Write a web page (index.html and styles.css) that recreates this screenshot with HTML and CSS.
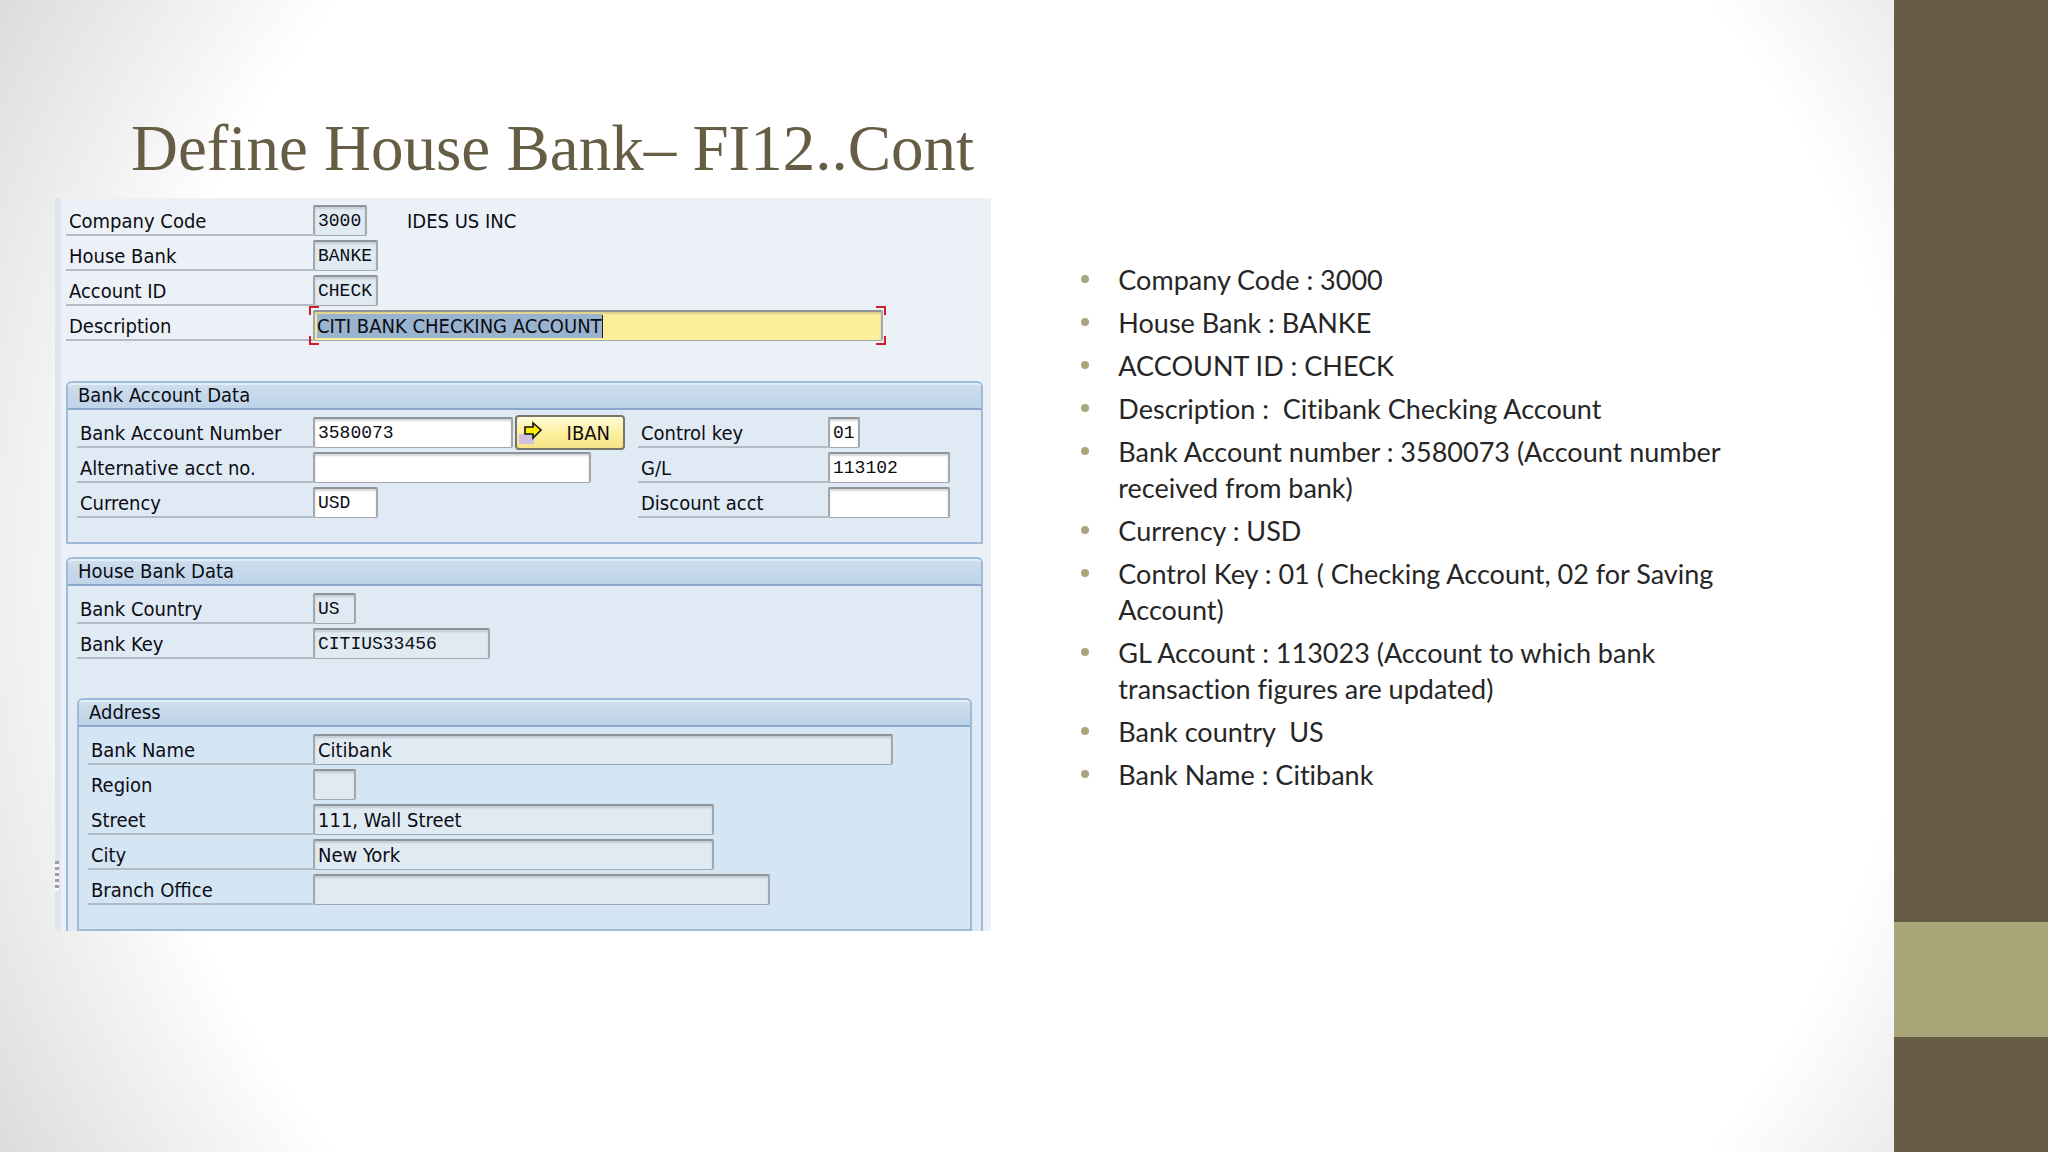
FILE: index.html
```html
<!DOCTYPE html>
<html lang="en">
<head>
    <meta charset="UTF-8">
    <meta name="viewport" content="width=device-width, initial-scale=1.0">
    <title>Define House Bank</title>
    <link rel="stylesheet" href="styles.css">
</head>
<body>
    <main class="slide">
        <h1>Define House Bank– FI12..Cont</h1>
        <div class="columns">
            <form class="sap">
                <div class="splitter"><span class="grip"></span></div>
                <div class="screen">
                    <div class="rows">
                        <div class="row">
                            <label for="company">Company Code</label>
                            <input id="company" class="mono w-4" value="3000" readonly>
                            <span class="note">IDES US INC</span>
                        </div>
                        <div class="row">
                            <label for="bank">House Bank</label>
                            <input id="bank" class="mono w-5" value="BANKE" readonly>
                        </div>
                        <div class="row">
                            <label for="account">Account ID</label>
                            <input id="account" class="mono w-5" value="CHECK" readonly>
                        </div>
                        <div class="row">
                            <label for="description">Description</label>
                            <div class="focus">
                                <input id="description" value="CITI BANK CHECKING ACCOUNT">
                            </div>
                        </div>
                    </div>

                    <section class="group">
                        <h2>Bank Account Data</h2>
                        <div class="pair">
                            <div class="rows">
                                <div class="row">
                                    <label for="number">Bank Account Number</label>
                                    <input id="number" class="mono w-18" value="3580073">
                                    <button type="button" class="iban">
                                        <svg width="24" height="24" viewBox="0 0 24 24">
                                            <rect x="0" y="13" width="15" height="10" fill="#d3bfe0"/>
                                            <path d="M6 6h8V2l8 7-8 8v-4H6z" fill="#ffee00" stroke="#111" stroke-width="1.6"/>
                                        </svg>
                                        <span>IBAN</span>
                                    </button>
                                </div>
                                <div class="row">
                                    <label for="alternative">Alternative acct no.</label>
                                    <input id="alternative" class="w-25">
                                </div>
                                <div class="row">
                                    <label for="currency">Currency</label>
                                    <input id="currency" class="mono w-5" value="USD">
                                </div>
                            </div>
                            <div class="rows right">
                                <div class="row">
                                    <label for="control">Control key</label>
                                    <input id="control" class="mono w-2" value="01">
                                </div>
                                <div class="row">
                                    <label for="gl">G/L</label>
                                    <input id="gl" class="mono w-10" value="113102">
                                </div>
                                <div class="row">
                                    <label for="discount">Discount acct</label>
                                    <input id="discount" class="w-10">
                                </div>
                            </div>
                        </div>
                    </section>

                    <section class="group open">
                        <h2>House Bank Data</h2>
                        <div class="rows">
                            <div class="row">
                                <label for="country">Bank Country</label>
                                <input id="country" class="mono w-3" value="US" readonly>
                            </div>
                            <div class="row">
                                <label for="key">Bank Key</label>
                                <input id="key" class="mono w-15" value="CITIUS33456" readonly>
                            </div>
                        </div>
                        <section class="group address">
                            <h2>Address</h2>
                            <div class="rows">
                                <div class="row">
                                    <label for="name">Bank Name</label>
                                    <input id="name" class="w-60" value="Citibank" readonly>
                                </div>
                                <div class="row">
                                    <label for="region" class="plain">Region</label>
                                    <input id="region" class="w-3" readonly>
                                </div>
                                <div class="row">
                                    <label for="street">Street</label>
                                    <input id="street" class="w-35" value="111, Wall Street" readonly>
                                </div>
                                <div class="row">
                                    <label for="city">City</label>
                                    <input id="city" class="w-35" value="New York" readonly>
                                </div>
                                <div class="row">
                                    <label for="branch">Branch Office</label>
                                    <input id="branch" class="w-40" readonly>
                                </div>
                            </div>
                        </section>
                    </section>
                </div>
            </form>

            <ul class="notes">
                <li>Company Code : 3000</li>
                <li>House Bank : BANKE</li>
                <li>ACCOUNT ID : CHECK</li>
                <li>Description :&nbsp; Citibank Checking Account</li>
                <li>Bank Account number : 3580073 (Account number received from bank)</li>
                <li>Currency : USD</li>
                <li>Control Key : 01 ( Checking Account, 02 for Saving Account)</li>
                <li>GL Account : 113023 (Account to which bank transaction figures are updated)</li>
                <li>Bank country&nbsp; US</li>
                <li>Bank Name : Citibank</li>
            </ul>
        </div>
    </main>
    <aside class="band">
        <div class="accent"></div>
    </aside>
    <script>
        const description = document.getElementById('description');
        description.focus();
        description.select();
    </script>
</body>
</html>
```
FILE: styles.css
```css
* {
    box-sizing: border-box;
}
body {
    display: flex;
    min-height: 100vh;
    margin: 0;
    background: white;
}
.slide {
    flex: 1;
    min-width: 0;
    padding: 108px 128px 0 55px;
    background: radial-gradient(circle farthest-corner at 54% 50%, #ffffff 76%, #f6f6f7 82%, #dcdcdc 100%);
}
h1 {
    margin: 0;
    padding-left: 76px;
    color: #665d45;
    font: 65px/80px "Liberation Serif", serif;
}
.columns {
    display: grid;
    grid-template-columns: 15fr 11fr;
    gap: 88px;
    margin-top: 10px;
    align-items: start;
}

/* SAP form */
.sap {
    --label: 247px;
    display: flex;
    background: #ebf1f7;
    color: #0c0c14;
    font: 20px/24px "DejaVu Sans Condensed", "Noto Sans", sans-serif;
}
.splitter {
    flex: none;
    width: 6px;
    padding-top: 663px;
    background: #e0e5e9;
}
.grip {
    display: block;
    width: 4px;
    height: 30px;
    background: repeating-linear-gradient(#999da0 0 3px, #f4f6f8 3px 6px);
}
.screen {
    flex: 1;
    min-width: 0;
    padding: 7px 8px 0 5px;
}
.rows {
    display: flex;
    flex-direction: column;
    gap: 4px;
}
.row {
    display: flex;
    height: 31px;
}
label {
    flex: none;
    width: var(--label);
    padding: 4px 0 0 3px;
    border-bottom: 2px solid #b3bbc4;
    white-space: nowrap;
}
label.plain {
    border-color: transparent;
}
input {
    min-width: 0;
    height: 31px;
    margin: 0;
    padding: 0 3px;
    border: 2px solid #a3a8ae;
    border-top-color: #8f9499;
    border-bottom-width: 1px;
    border-radius: 2px;
    background: white;
    box-shadow: inset 0 2px 2px #d5d8dc;
    color: inherit;
    font: inherit;
    outline: none;
}
input[readonly] {
    background: #e0eaf3;
    box-shadow: inset 0 2px 2px #c3ccd5;
}
input.mono {
    font: 18px/23px "Liberation Mono", monospace;
}
.w-2 { width: 32px; }
.w-3 { width: 43px; }
.w-4 { width: 54px; }
.w-5 { width: 65px; }
.w-10 { width: 122px; }
.w-15 { width: 177px; }
.w-18 { width: 200px; }
.w-25 { width: 278px; }
.w-35 { width: 401px; }
.w-40 { width: 457px; }
.w-60 { width: 580px; }
.note {
    padding: 4px 0 0 40px;
}

/* focused field with red corner marks */
.focus {
    position: relative;
    width: 570px;
}
.focus::before,
.focus::after {
    content: "";
    position: absolute;
    top: -4px;
    bottom: -4px;
    width: 10px;
    border: solid #cc1f2b;
    border-width: 2px 0;
    background: linear-gradient(#cc1f2b 7px, transparent 7px calc(100% - 7px), #cc1f2b calc(100% - 7px)) left / 2px 100% no-repeat;
}
.focus::before {
    left: -4px;
}
.focus::after {
    right: -3px;
    background-position: right;
}
.focus input {
    width: 100%;
    padding: 0 2px;
    background: #fdee9c linear-gradient(#1c1c1c, #1c1c1c) 286px center / 2px 23px no-repeat;
    box-shadow: inset 0 2px 2px #dccf8e;
}
.focus input::selection {
    background: #9ab3cf;
    color: #0c0c14;
}

.group {
    --label: 236px;
    margin-top: 40px;
    padding-bottom: 24px;
    border: 2px solid #9dbad9;
    border-radius: 6px 6px 0 0;
    background: #dfeaf4;
}
.group h2 {
    height: 27px;
    margin: 0 0 7px;
    padding-left: 10px;
    border-top: 2px solid #e3eff8;
    border-bottom: 2px solid #8aa8cc;
    border-radius: 4px 4px 0 0;
    background: linear-gradient(#cddeec, #bdd3e9);
    font: inherit;
    line-height: 20px;
}
.group .rows {
    padding-left: 9px;
}
.group + .group {
    margin-top: 13px;
}
.group.open {
    padding-bottom: 0;
    border-bottom: 0;
}
.pair {
    display: flex;
}
.pair .right {
    --label: 190px;
    padding-left: 13px;
}
.iban {
    display: flex;
    align-items: center;
    justify-content: space-between;
    flex: none;
    width: 110px;
    height: 35px;
    margin: -2px 0 0 2px;
    padding: 0 13px 0 2px;
    border: 2px solid #77756a;
    border-radius: 4px;
    background: linear-gradient(#fffbd8, #fdefa0 50%, #f6e488);
    color: inherit;
    font: inherit;
}
.group .address {
    --label: 225px;
    margin: 39px 9px 0;
    background: #d4e5f4;
}

/* bullet list */
.notes {
    margin: 64px 0 0;
    padding: 0 0 0 39px;
    color: #262626;
    font: 27px/36px Lato, sans-serif;
    font-variant-ligatures: none;
    list-style: none;
}
.notes li {
    position: relative;
    margin-bottom: 7px;
}
.notes li::before {
    content: "";
    position: absolute;
    top: 13px;
    left: -37px;
    width: 8px;
    height: 8px;
    border-radius: 50%;
    background: #a9a57c;
}

/* right band */
.band {
    display: grid;
    grid-template-rows: 8fr 1fr 1fr;
    width: 154px;
    background: #675d45;
}
.accent {
    grid-row: 2;
    background: #aba679;
}
```
